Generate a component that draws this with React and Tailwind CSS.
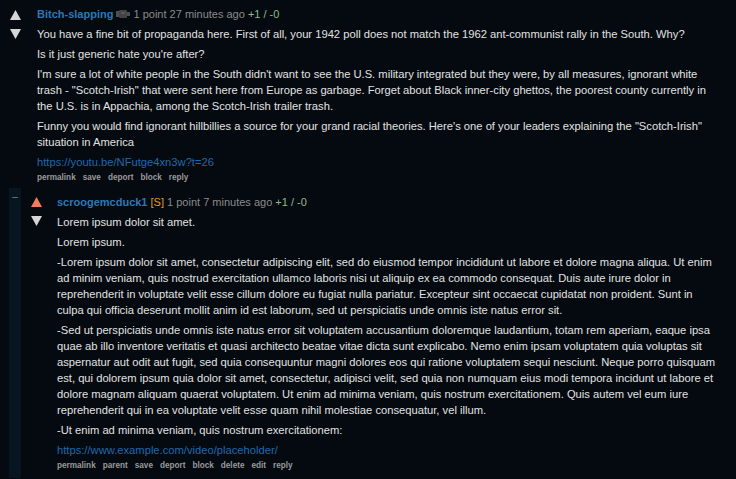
const FONT = "font-['Liberation_Sans',Arial,Helvetica,sans-serif]";

function UpArrow({ active }) {
  return (
    <svg width="11" height="10" viewBox="0 0 11 10" className="block">
      <polygon points="5.5,0 11,10 0,10" fill={active ? "#f27c5e" : "#d6d6d6"} />
    </svg>
  );
}

function DownArrow() {
  return (
    <svg width="11" height="10" viewBox="0 0 11 10" className="block">
      <polygon points="0,0 11,0 5.5,10" fill="#d6d6d6" />
    </svg>
  );
}

function FlairIcon() {
  return (
    <svg width="14" height="10" viewBox="0 0 14 10" className="inline-block align-[-1px] opacity-70">
      <rect x="0" y="2" width="3" height="6" fill="#6b6b6b" />
      <rect x="3" y="1" width="8" height="8" rx="1" fill="#5d5d5d" />
      <rect x="11" y="3" width="3" height="4" fill="#6b6b6b" />
      <rect x="5" y="3" width="4" height="2" fill="#7a7a7a" />
    </svg>
  );
}

function Meta({ user, submitter, age }) {
  return (
    <div className="text-[11px] leading-[16px] text-[#8b8b8b]">
      <span className="font-bold text-[#2b78b8]">{user}</span>{" "}
      {submitter ? (
        <span className="text-[#e39a1c]">[S]</span>
      ) : (
        <FlairIcon />
      )}{" "}
      1 point {age}{" "}
      <span className="text-[#8fb98a]">+1 / -0</span>
    </div>
  );
}

function Buttons({ items }) {
  return (
    <div className="mt-[2px] flex gap-[7px] text-[8.2px] font-bold leading-[12px] text-[#9a9a9a]">
      {items.map((b) => (
        <span key={b}>{b}</span>
      ))}
    </div>
  );
}

function Body({ paragraphs, link }) {
  return (
    <div className="text-[11.2px] leading-[16px] text-[#e2e2e2]">
      {paragraphs.map((p, i) => (
        <p key={i} className="mt-[4px]">
          {p}
        </p>
      ))}
      <p className="mt-[4px] text-[#2068ab]">{link}</p>
    </div>
  );
}

const PARENT = [
  "You have a fine bit of propaganda here. First of all, your 1942 poll does not match the 1962 ant-communist rally in the South. Why?",
  "Is it just generic hate you're after?",
  "I'm sure a lot of white people in the South didn't want to see the U.S. military integrated but they were, by all measures, ignorant white trash - \"Scotch-Irish\" that were sent here from Europe as garbage. Forget about Black inner-city ghettos, the poorest county currently in the U.S. is in Appachia, among the Scotch-Irish trailer trash.",
  "Funny you would find ignorant hillbillies a source for your grand racial theories. Here's one of your leaders explaining the \"Scotch-Irish\" situation in America",
];

// hateful reply text replaced with neutral filler of similar length
const CHILD = [
  "Lorem ipsum dolor sit amet.",
  "Lorem ipsum.",
  "-Lorem ipsum dolor sit amet, consectetur adipiscing elit, sed do eiusmod tempor incididunt ut labore et dolore magna aliqua. Ut enim ad minim veniam, quis nostrud exercitation ullamco laboris nisi ut aliquip ex ea commodo consequat. Duis aute irure dolor in reprehenderit in voluptate velit esse cillum dolore eu fugiat nulla pariatur. Excepteur sint occaecat cupidatat non proident. Sunt in culpa qui officia deserunt mollit anim id est laborum, sed ut perspiciatis unde omnis iste natus error sit.",
  "-Sed ut perspiciatis unde omnis iste natus error sit voluptatem accusantium doloremque laudantium, totam rem aperiam, eaque ipsa quae ab illo inventore veritatis et quasi architecto beatae vitae dicta sunt explicabo. Nemo enim ipsam voluptatem quia voluptas sit aspernatur aut odit aut fugit, sed quia consequuntur magni dolores eos qui ratione voluptatem sequi nesciunt. Neque porro quisquam est, qui dolorem ipsum quia dolor sit amet, consectetur, adipisci velit, sed quia non numquam eius modi tempora incidunt ut labore et dolore magnam aliquam quaerat voluptatem. Ut enim ad minima veniam, quis nostrum exercitationem. Quis autem vel eum iure reprehenderit qui in ea voluptate velit esse quam nihil molestiae consequatur, vel illum.",
  "-Ut enim ad minima veniam, quis nostrum exercitationem:",
];

export default function App() {
  return (
    <div className={`min-h-screen w-[736px] bg-[#040a10] pl-[9px] pr-[14px] pt-[6px] ${FONT}`}>
      <div className="flex">
        <div className="flex w-[28px] shrink-0 flex-col pl-[1px] pt-[4px]">
          <UpArrow />
          <div className="mt-[9px]">
            <DownArrow />
          </div>
        </div>
        <div className="min-w-0 flex-1">
          <Meta user="Bitch-slapping" age="27 minutes ago" />
          <Body paragraphs={PARENT} link="https://youtu.be/NFutge4xn3w?t=26" />
          <Buttons items={["permalink", "save", "deport", "block", "reply"]} />
        </div>
      </div>

      <div className="mt-[4px] flex">
        <div className="w-[12px] shrink-0 bg-[#071521] pt-[3px] text-center text-[10px] leading-[12px] text-[#7c8790]">
          –
        </div>
        <div className="flex min-w-0 flex-1 pl-[10px] pt-[6px]">
          <div className="flex w-[26px] shrink-0 flex-col pt-[3px]">
            <UpArrow active />
            <div className="mt-[9px]">
              <DownArrow />
            </div>
          </div>
          <div className="min-w-0 flex-1 pb-[6px]">
            <Meta user="scroogemcduck1" submitter age="7 minutes ago" />
            <Body paragraphs={CHILD} link="https://www.example.com/video/placeholder/" />
            <Buttons
              items={["permalink", "parent", "save", "deport", "block", "delete", "edit", "reply"]}
            />
          </div>
        </div>
      </div>
    </div>
  );
}
